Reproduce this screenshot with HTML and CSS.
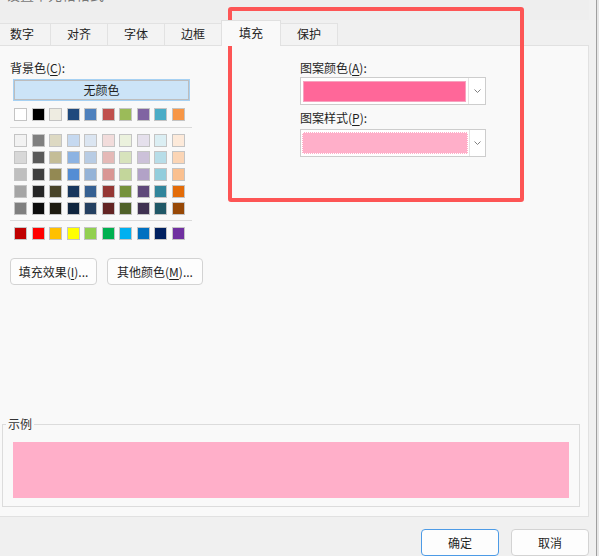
FILE: index.html
```html
<!DOCTYPE html>
<html lang="zh-CN">
<head>
<meta charset="utf-8">
<title>设置单元格格式</title>
<link rel="stylesheet" href="styles.css">
</head>
<body>
<div class="screen">
  <div class="dialog">
    <div class="titlebar"><span class="title">设置单元格格式</span></div>
    <div class="tabs">
      <div class="tab">数字</div>
      <div class="tab">对齐</div>
      <div class="tab">字体</div>
      <div class="tab">边框</div>
      <div class="tab active">填充</div>
      <div class="tab">保护</div>
    </div>
    <div class="panel">
      <div class="cols">
        <div class="col-left">
          <div class="label">背景色(<u>C</u>):</div>
          <div class="nocolor">无颜色</div>
          <div class="swatches row-first">
            <span class="sw" style="background:#ffffff"></span>
            <span class="sw" style="background:#000000"></span>
            <span class="sw" style="background:#eeece1"></span>
            <span class="sw" style="background:#1f497d"></span>
            <span class="sw" style="background:#4f81bd"></span>
            <span class="sw" style="background:#c0504d"></span>
            <span class="sw" style="background:#9bbb59"></span>
            <span class="sw" style="background:#8064a2"></span>
            <span class="sw" style="background:#4bacc6"></span>
            <span class="sw" style="background:#f79646"></span>
          </div>
          <div class="sep"></div>
          <div class="swatches row-grid">
            <span class="sw" style="background:#f2f2f2"></span>
            <span class="sw" style="background:#7f7f7f"></span>
            <span class="sw" style="background:#ddd9c3"></span>
            <span class="sw" style="background:#c6d9f0"></span>
            <span class="sw" style="background:#dbe5f1"></span>
            <span class="sw" style="background:#f2dcdb"></span>
            <span class="sw" style="background:#ebf1dd"></span>
            <span class="sw" style="background:#e5e0ec"></span>
            <span class="sw" style="background:#dbeef3"></span>
            <span class="sw" style="background:#fdeada"></span>

            <span class="sw" style="background:#d8d8d8"></span>
            <span class="sw" style="background:#595959"></span>
            <span class="sw" style="background:#c4bd97"></span>
            <span class="sw" style="background:#8db3e2"></span>
            <span class="sw" style="background:#b8cce4"></span>
            <span class="sw" style="background:#e5b9b7"></span>
            <span class="sw" style="background:#d7e3bc"></span>
            <span class="sw" style="background:#ccc1d9"></span>
            <span class="sw" style="background:#b7dde8"></span>
            <span class="sw" style="background:#fbd5b5"></span>

            <span class="sw" style="background:#bfbfbf"></span>
            <span class="sw" style="background:#3f3f3f"></span>
            <span class="sw" style="background:#938953"></span>
            <span class="sw" style="background:#548dd4"></span>
            <span class="sw" style="background:#95b3d7"></span>
            <span class="sw" style="background:#d99694"></span>
            <span class="sw" style="background:#c3d69b"></span>
            <span class="sw" style="background:#b2a2c7"></span>
            <span class="sw" style="background:#92cddc"></span>
            <span class="sw" style="background:#fac08f"></span>

            <span class="sw" style="background:#a5a5a5"></span>
            <span class="sw" style="background:#262626"></span>
            <span class="sw" style="background:#494429"></span>
            <span class="sw" style="background:#17365d"></span>
            <span class="sw" style="background:#366092"></span>
            <span class="sw" style="background:#953734"></span>
            <span class="sw" style="background:#76923c"></span>
            <span class="sw" style="background:#5f497a"></span>
            <span class="sw" style="background:#31859b"></span>
            <span class="sw" style="background:#e36c09"></span>

            <span class="sw" style="background:#7f7f7f"></span>
            <span class="sw" style="background:#0c0c0c"></span>
            <span class="sw" style="background:#1d1b10"></span>
            <span class="sw" style="background:#0f243e"></span>
            <span class="sw" style="background:#244061"></span>
            <span class="sw" style="background:#632423"></span>
            <span class="sw" style="background:#4f6128"></span>
            <span class="sw" style="background:#3f3151"></span>
            <span class="sw" style="background:#205867"></span>
            <span class="sw" style="background:#974806"></span>
          </div>
          <div class="sep sep-2"></div>
          <div class="swatches row-std">
            <span class="sw" style="background:#c00000"></span>
            <span class="sw" style="background:#ff0000"></span>
            <span class="sw" style="background:#ffc000"></span>
            <span class="sw" style="background:#ffff00"></span>
            <span class="sw" style="background:#92d050"></span>
            <span class="sw" style="background:#00b050"></span>
            <span class="sw" style="background:#00b0f0"></span>
            <span class="sw" style="background:#0070c0"></span>
            <span class="sw" style="background:#002060"></span>
            <span class="sw" style="background:#7030a0"></span>
          </div>
          <div class="btnrow">
            <button class="btn btn-fx">填充效果(<u>I</u>)...</button>
            <button class="btn btn-more">其他颜色(<u>M</u>)...</button>
          </div>
        </div>
        <div class="col-right">
          <div class="label">图案颜色(<u>A</u>):</div>
          <div class="combo">
            <div class="combo-swatch swatch-hot"></div>
            <div class="combo-arrow">
              <svg width="7" height="4" viewBox="0 0 7 4"><polyline points="0.5,0.5 3.5,3.5 6.5,0.5" fill="none" stroke="#808080" stroke-width="1"/></svg>
            </div>
          </div>
          <div class="label label-2">图案样式(<u>P</u>):</div>
          <div class="combo combo-focus">
            <div class="combo-swatch swatch-pattern"></div>
            <div class="combo-arrow">
              <svg width="7" height="4" viewBox="0 0 7 4"><polyline points="0.5,0.5 3.5,3.5 6.5,0.5" fill="none" stroke="#808080" stroke-width="1"/></svg>
            </div>
          </div>
        </div>
      </div>
      <fieldset class="sample">
        <legend>示例</legend>
        <div class="sample-fill"></div>
      </fieldset>
    </div>
    <div class="footer">
      <button class="btn btn-dlg btn-default">确定</button>
      <button class="btn btn-dlg">取消</button>
    </div>
  </div>
  <div class="edge"></div>
  <div class="sheet"></div>
</div>
<div class="annot"></div>
</body>
</html>
```

FILE: styles.css
```css
html, body {
  margin: 0;
  padding: 0;
}
body {
  width: 599px;
  height: 556px;
  overflow: hidden;
  position: relative;
  background: #f0f0f0;
  font-family: "Noto Sans CJK SC", "Noto Sans", sans-serif;
  font-size: 12px;
  color: #1f1f1f;
}
u {
  text-decoration: underline;
  text-underline-offset: 2px;
}
.screen {
  display: flex;
  height: 556px;
}
.dialog {
  width: 596px;
  flex: none;
  box-sizing: border-box;
  padding-right: 7px;
  display: flex;
  flex-direction: column;
  background: #f0f0f0;
}
.titlebar {
  height: 20px;
  overflow: hidden;
  background: #eeeeee;
}
.title {
  display: block;
  margin: -13px 0 0 6px;
  font-size: 14px;
  line-height: 14px;
  color: #777;
}
.tabs {
  display: flex;
  align-items: flex-end;
  height: 25px;
  margin-left: -7px;
  position: relative;
  z-index: 1;
}
.tab {
  width: 58px;
  height: 22px;
  box-sizing: border-box;
  border: 1px solid #e2e2e2;
  border-bottom: none;
  margin-right: -1px;
  background: #f3f3f3;
  display: flex;
  align-items: center;
  justify-content: center;
  line-height: 1;
  color: #222;
}
.tab.active {
  width: 60px;
  height: 26px;
  margin-bottom: -1px;
  background: #f9f9f9;
  border-color: #e0e0e0;
}
.panel {
  margin-left: -1px;
  height: 473px;
  box-sizing: border-box;
  border: 1px solid #e1e1e1;
  background: #f9f9f9;
  display: flex;
  flex-direction: column;
  padding-top: 14px;
}
.cols {
  display: flex;
  padding-left: 10px;
}
.col-left {
  width: 290px;
  flex: none;
}
.col-right {
  width: 186px;
}
.label {
  height: 16px;
  line-height: 16px;
  color: #1f1f1f;
}
.nocolor {
  margin: 3px 0 0 3px;
  width: 177px;
  height: 22px;
  box-sizing: border-box;
  border: 1px solid #a6d1f3;
  box-shadow: inset 0 0 0 1px #bdbdbd;
  background: #cce4f7;
  text-align: center;
  line-height: 20px;
}
.swatches {
  display: grid;
  grid-template-columns: repeat(10, 13px);
  column-gap: 4.56px;
  row-gap: 4px;
  margin-left: 4px;
}
.row-first {
  margin-top: 7px;
}
.row-grid {
  margin-top: 6px;
}
.row-std {
  margin-top: 6px;
}
.sw {
  display: block;
  width: 13px;
  height: 13px;
  box-sizing: border-box;
  border: 1px solid #c4c4c4;
}
.sep {
  width: 182px;
  height: 1px;
  background: #dadada;
  margin-top: 6px;
}
.sep-2 {
  margin-top: 5px;
}
.btnrow {
  display: flex;
  gap: 10px;
  margin-top: 18px;
}
.btn {
  height: 27px;
  box-sizing: border-box;
  border: 1px solid #d3d3d3;
  border-radius: 4px;
  background: #fdfdfd;
  font: inherit;
  color: #1f1f1f;
  padding: 0;
  text-align: center;
}
.btn-fx {
  width: 87px;
}
.btn-more {
  width: 96px;
}
.combo {
  margin-top: 1px;
  width: 186px;
  height: 28px;
  box-sizing: border-box;
  border: 1px solid #cdcdcd;
  background: #ffffff;
  display: flex;
}
.combo-swatch {
  margin: 3px 2px 2px 2px;
  width: 163px;
  flex: none;
  box-sizing: border-box;
}
.swatch-hot {
  background: #ff6799;
  border: 1px solid #f7a2bf;
}
.label-2 {
  margin-top: 5px;
}
.combo-focus {
  margin-top: 3px;
}
.combo-focus .combo-swatch {
  margin: 2px 1px 2px 1px;
  width: 166px;
}
.swatch-pattern {
  background: #ffafc9;
  border: 1px dotted #ffffff;
}
.combo-arrow {
  flex: 1;
  border-left: 1px solid #e4e4e4;
  display: flex;
  align-items: center;
  justify-content: center;
}
.sample {
  margin: auto 8px 9px 2px;
  padding: 10px 10px 8px 10px;
  border: 1px solid #dcdcdc;
  min-width: 0;
}
.sample legend {
  padding: 0 2px;
  margin-left: -7px;
  line-height: 16px;
  color: #333;
}
.sample-fill {
  height: 56px;
  background: #ffafc9;
}
.footer {
  display: flex;
  justify-content: flex-end;
  gap: 12px;
  margin-top: 12px;
}
.btn-dlg {
  width: 78px;
  height: 27px;
  background: #fdfdfd;
}
.btn-default {
  border-color: #4d9be6;
}
.edge {
  width: 1px;
  flex: none;
  background: #9f9f9f;
}
.sheet {
  flex: 1;
  background: #e6e6e6;
}
.annot {
  position: absolute;
  left: 228px;
  top: 7px;
  width: 296px;
  height: 195px;
  box-sizing: border-box;
  border: 4px solid #fd5555;
  border-radius: 3px;
}
```
